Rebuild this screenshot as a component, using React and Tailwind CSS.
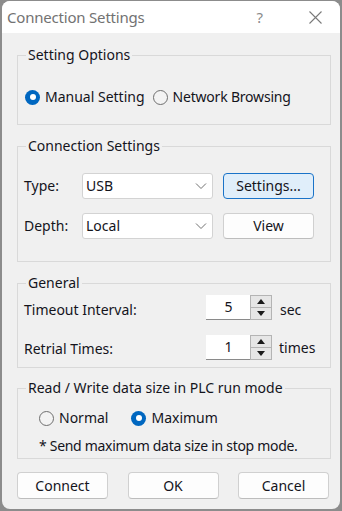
import React from "react";

const font = { fontFamily: '"Noto Sans", "Liberation Sans", sans-serif' };

function Radio({ checked, label, className = "" }) {
    return (
        <div className={`flex items-center gap-[5px] ${className}`}>
            {checked ? (
                <span className="w-[15px] h-[15px] rounded-full bg-[#0067c0] flex items-center justify-center">
                    <span className="w-[6px] h-[6px] rounded-full bg-white"></span>
                </span>
            ) : (
                <span className="w-[15px] h-[15px] rounded-full border border-[#6e6e6e] bg-[#f3f3f3]"></span>
            )}
            <span className="leading-[20px]">{label}</span>
        </div>
    );
}

function Group({ title, className = "", children }) {
    return (
        <div className={`relative border border-[#d9d9d9] ${className}`}>
            <span className="absolute -top-[11px] left-[8px] px-[2px] bg-[#f0f0f0] leading-[20px]">{title}</span>
            {children}
        </div>
    );
}

function Combo({ value }) {
    return (
        <div className="w-[131px] h-[26px] bg-white border border-[#d3d3d3] rounded-[3px] flex items-center justify-between pl-[3px] pr-[5px]">
            <span className="leading-[20px]">{value}</span>
            <svg width="12" height="8" viewBox="0 0 12 8" fill="none" stroke="#707070" strokeWidth="1">
                <path d="M1 1.5 L6 6.5 L11 1.5" />
            </svg>
        </div>
    );
}

function Button({ children, primary = false, className = "" }) {
    return (
        <div
            className={`h-[26px] w-[91px] rounded-[4px] flex items-center justify-center leading-[20px] ${
                primary
                    ? "bg-[#e0eefa] border border-[#1a73c8]"
                    : "bg-[#fdfdfd] border border-[#d0d0d0] border-b-[#bdbdbd]"
            } ${className}`}
        >
            {children}
        </div>
    );
}

function Spin({ value }) {
    return (
        <div className="flex h-[25px]">
            <div className="w-[44px] bg-white border-b border-[#8a8a8a] flex items-center justify-center pl-[1px] leading-[20px]">
                {value}
            </div>
            <div className="w-[22px] flex flex-col border border-[#b4b4b4] bg-[#e6e6e6]">
                <div className="flex-1 border-b border-[#b4b4b4] flex items-center justify-center">
                    <svg width="8" height="5" viewBox="0 0 8 5">
                        <path d="M0 5 L4 0 L8 5 Z" fill="#1a1a1a" />
                    </svg>
                </div>
                <div className="flex-1 flex items-center justify-center">
                    <svg width="8" height="5" viewBox="0 0 8 5">
                        <path d="M0 0 L8 0 L4 5 Z" fill="#1a1a1a" />
                    </svg>
                </div>
            </div>
        </div>
    );
}

export default function App() {
    return (
        <div className="w-[342px] h-[511px] bg-[#8c8c8c] pt-[1px] px-[2px] pb-[2px] overflow-hidden" style={font}>
            <div className="h-full rounded-[8px] bg-[#f0f0f0] overflow-hidden flex flex-col text-[14px] text-[#14141c]">
                {/* title bar */}
                <div className="h-[32px] bg-white flex items-center pl-[5px] pr-[18px] shrink-0">
                    <span className="text-[15px] text-[#727272] leading-[20px] tracking-[-0.2px]">Connection Settings</span>
                    <span className="ml-auto text-[15px] text-[#8a8a8a] leading-[20px]">?</span>
                    <svg className="ml-[46px]" width="13" height="13" viewBox="0 0 13 13" stroke="#7a7a7a" strokeWidth="1.1">
                        <path d="M0.5 0.5 L12.5 12.5 M12.5 0.5 L0.5 12.5" />
                    </svg>
                </div>

                <div className="pl-[15px] pr-[9px] flex flex-col">
                    <Group title="Setting Options" className="mt-[22px] h-[70px] pt-[31px] pl-[7px]">
                        <div className="flex items-center">
                            <Radio checked label="Manual Setting" />
                            <Radio label="Network Browsing" className="ml-[8px] tracking-[-0.2px]" />
                        </div>
                    </Group>

                    <Group title="Connection Settings" className="mt-[21px] h-[116px] pt-[26px] pl-[6px] flex flex-col gap-[14px]">
                        <div className="flex items-center">
                            <span className="w-[58px] leading-[20px]">Type:</span>
                            <Combo value="USB" />
                            <Button primary className="ml-[10px]">Settings...</Button>
                        </div>
                        <div className="flex items-center">
                            <span className="w-[58px] leading-[20px]">Depth:</span>
                            <Combo value="Local" />
                            <Button className="ml-[10px]">View</Button>
                        </div>
                    </Group>

                    <Group title="General" className="mt-[21px] h-[85px] pt-[11px] pl-[6px] flex flex-col gap-[15px]">
                        <div className="flex items-center">
                            <span className="w-[182px] leading-[20px] mt-[5px]">Timeout Interval:</span>
                            <Spin value="5" />
                            <span className="ml-[8px] leading-[20px] mt-[4px]">sec</span>
                        </div>
                        <div className="flex items-center">
                            <span className="w-[182px] leading-[20px] mt-[2px]">Retrial Times:</span>
                            <Spin value="1" />
                            <span className="ml-[7px] leading-[20px]">times</span>
                        </div>
                    </Group>

                    <Group title="Read / Write data size in PLC run mode" className="mt-[20px] h-[71px] pt-[19px] pl-[21px]">
                        <div className="flex items-center">
                            <Radio label="Normal" />
                            <Radio checked label="Maximum" className="ml-[23px]" />
                        </div>
                        <div className="mt-[8px] leading-[20px] tracking-[-0.3px]">* Send maximum data size in stop mode.</div>
                    </Group>

                    <div className="mt-[13px] mr-[2px] flex justify-between">
                        <Button className="h-[27px]">Connect</Button>
                        <Button className="h-[27px]">OK</Button>
                        <Button className="h-[27px]">Cancel</Button>
                    </div>
                </div>
            </div>
        </div>
    );
}
